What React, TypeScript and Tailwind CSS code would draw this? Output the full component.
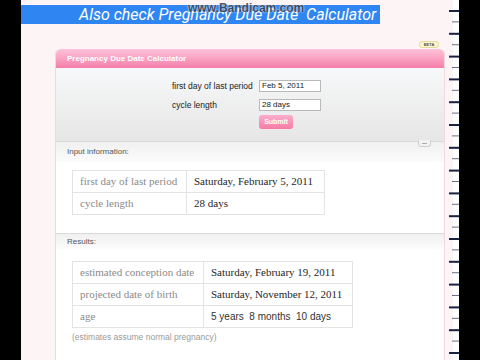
import React from "react";

const sans = "font-['Liberation_Sans',Arial,sans-serif]";
const serif = "font-['Liberation_Serif','Times_New_Roman',serif]";

function Ticks() {
  const ticks = Array.from({ length: 32 }, (_, i) => i);
  return (
    <svg width="11" height="360" className="block">
      {ticks.map((i) => {
        const y = 10 + i * 11.4;
        const bold = i % 2 === 0;
        return (
          <rect
            key={i}
            x={bold ? 1 : 4}
            y={y}
            width={bold ? 10 : 7}
            height={bold ? 2 : 1}
            fill={bold ? "#1b2140" : "#6a7080"}
          />
        );
      })}
    </svg>
  );
}

function Row({ label, value, last, valueClass }: { label: string; value: string; last?: boolean; valueClass?: string }) {
  return (
    <tr className={`h-[22px] ${last ? "" : "border-b border-[#e3e3e3]"}`}>
      <td className={`${serif} border-r border-[#e3e3e3] px-[7px] text-[11px] text-[#8a8a8a] whitespace-nowrap`}>{label}</td>
      <td className={`${valueClass ?? serif + " text-[11px] text-[#262626]"} px-[7px] whitespace-pre`}>{value}</td>
    </tr>
  );
}

function SectionStrip({ text, h }: { text: string; h: string }) {
  return (
    <div className={`${h} flex items-center border-t border-[#d9d9d9] bg-gradient-to-b from-[#f0f0f0] to-[#fcfcfc] px-[11px]`}>
      <span className={`${sans} text-[8px] text-[#555]`}>{text}</span>
    </div>
  );
}

export default function App() {
  return (
    <div className="relative flex h-[360px] w-[480px] overflow-hidden bg-black">
      <div className="w-[21px] shrink-0 bg-black" />

      <div className="flex w-[427px] shrink-0 flex-col bg-[#fdf5f5] pt-[5px]">
        <div className="flex h-[19px] w-[359px] items-center bg-[#2f86f2] pl-[58px]">
          <span className="font-['Roboto',sans-serif] text-[16px] italic leading-none text-white whitespace-pre">
            Also check Pregnancy Due Date  Calculator
          </span>
        </div>

        <div className="mt-[17px] flex h-[7px] pl-[398px]">
          <div className="flex h-[7px] w-[20px] items-center justify-center rounded-[3px] border border-[#e6dc9a] bg-[#fbf6cf]">
            <span className={`${sans} text-[4px] font-bold leading-none text-[#555]`}>BETA</span>
          </div>
        </div>

        <div className="relative ml-[34px] mt-[1px] flex w-[390px] flex-1 flex-col rounded-t-[5px] border-x border-[#efd9de] bg-white">
          <div className="flex h-[19px] items-center rounded-t-[5px] bg-gradient-to-b from-[#fcc3d8] to-[#f47eab] px-[11px]">
            <span className={`${sans} text-[8px] font-bold text-white`}>Pregnancy Due Date Calculator</span>
          </div>

          <div className="flex h-[73px] flex-col bg-gradient-to-b from-[#f7f8f9] to-[#e6e6e6] pl-[116px] pt-[12px]">
            <div className="flex h-[12px] items-center">
              <span className={`${sans} w-[87px] text-[8.5px] text-[#222]`}>first day of last period</span>
              <div className={`${sans} flex h-[12px] w-[62px] items-center border border-[#b9b9b9] bg-white px-[2px] text-[8px] text-[#222]`}>
                Feb 5, 2011
              </div>
            </div>
            <div className="mt-[7px] flex h-[12px] items-center">
              <span className={`${sans} w-[87px] text-[8.5px] text-[#222]`}>cycle length</span>
              <div className={`${sans} flex h-[12px] w-[62px] items-center border border-[#b9b9b9] bg-white px-[2px] text-[8px] text-[#222]`}>
                28 days
              </div>
            </div>
            <div className="ml-[87px] mt-[4px] flex h-[14px] w-[34px] items-center justify-center rounded-[3px] bg-gradient-to-b from-[#fcaccb] to-[#f47ca3]">
              <span className={`${sans} text-[7px] font-bold text-white`}>Submit</span>
            </div>
          </div>

          <SectionStrip text="Input information:" h="h-[21px]" />

          <div className="ml-[16px] mt-[8px]">
            <table className="border-collapse border border-[#e3e3e3]">
              <tbody>
                <tr className="h-[22px] border-b border-[#e3e3e3]">
                  <td className={`${serif} w-[114px] border-r border-[#e3e3e3] px-[7px] text-[11px] text-[#8a8a8a] whitespace-nowrap`}>first day of last period</td>
                  <td className={`${serif} w-[138px] px-[7px] text-[11px] text-[#262626] whitespace-nowrap`}>Saturday, February 5, 2011</td>
                </tr>
                <tr className="h-[22px]">
                  <td className={`${serif} border-r border-[#e3e3e3] px-[7px] text-[11px] text-[#8a8a8a]`}>cycle length</td>
                  <td className={`${serif} px-[7px] text-[11px] text-[#262626]`}>28 days</td>
                </tr>
              </tbody>
            </table>
          </div>

          <div className="mt-[18px]">
            <SectionStrip text="Results:" h="h-[16px]" />
          </div>

          <div className="ml-[16px] mt-[12px]">
            <table className="border-collapse border border-[#e3e3e3]">
              <tbody>
                <tr className="h-[22px] border-b border-[#e3e3e3]">
                  <td className={`${serif} w-[131px] border-r border-[#e3e3e3] px-[7px] text-[11px] text-[#8a8a8a] whitespace-nowrap`}>estimated conception date</td>
                  <td className={`${serif} w-[149px] px-[7px] text-[11px] text-[#262626] whitespace-nowrap`}>Saturday, February 19, 2011</td>
                </tr>
                <Row label="projected date of birth" value="Saturday, November 12, 2011" />
                <Row label="age" value="5 years  8 months  10 days" last valueClass={`${sans} text-[10px] text-[#333]`} />
              </tbody>
            </table>
            <div className={`${sans} mt-[4px] text-[8.5px] leading-[10px] text-[#9a9a9a]`}>(estimates assume normal pregnancy)</div>
          </div>

          <div className="absolute left-[362px] top-[91px] flex h-[7px] w-[13px] items-center justify-center rounded-b-[3px] border border-t-0 border-[#cfcfcf] bg-[#f2f2f2]">
            <div className="h-px w-[5px] bg-[#aaa]" />
          </div>
        </div>
      </div>

      <div className="w-[11px] shrink-0 bg-[linear-gradient(to_right,#fdf5f5_5px,#ffffff_5px)]">
        <Ticks />
      </div>
      <div className="flex-1 bg-black" />

      <div className={`${sans} pointer-events-none absolute left-[188px] top-[1px] text-[12px] font-bold leading-[14px] text-[#36404a] opacity-85 [text-shadow:0_0_2px_#ffffff,0_0_1px_#ffffff]`}>
        www.Bandicam.com
      </div>
    </div>
  );
}
